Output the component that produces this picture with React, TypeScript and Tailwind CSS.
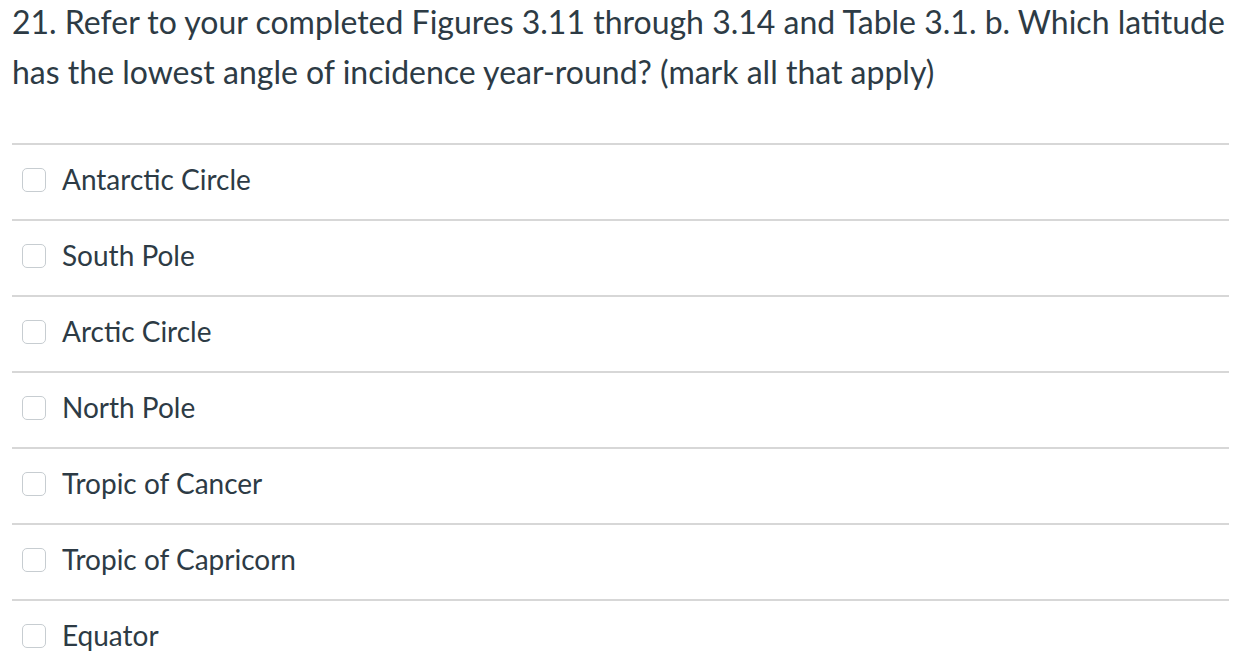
const options = [
  'Antarctic Circle',
  'South Pole',
  'Arctic Circle',
  'North Pole',
  'Tropic of Cancer',
  'Tropic of Capricorn',
  'Equator',
]

const App = () => {
  return (
    <div
      className="w-[1260px] h-[662px] overflow-hidden bg-white text-[#2d3b45] pl-[12px] pr-[31px]"
      style={{ fontFamily: 'Lato, "Liberation Sans", sans-serif' }}
    >
      <p className="text-[32px] leading-[49.5px] -mt-[3px] m-0">
        21. Refer to your completed Figures 3.11 through 3.14 and Table 3.1. b. Which latitude has the lowest angle of
        incidence year-round? (mark all that apply)
      </p>

      <div className="mt-[47px]">
        {options.map((o) => (
          <label key={o} className="flex items-start h-[76px] border-t-2 border-[#d7d7d7]">
            <span className="ml-[10px] mt-[23px] w-[24px] h-[24px] rounded-[5px] border border-[#c7cdd1] bg-white shrink-0" />
            <span className="ml-[16px] mt-[20px] text-[28px] leading-[28px]">{o}</span>
          </label>
        ))}
      </div>
    </div>
  )
}

export default App
